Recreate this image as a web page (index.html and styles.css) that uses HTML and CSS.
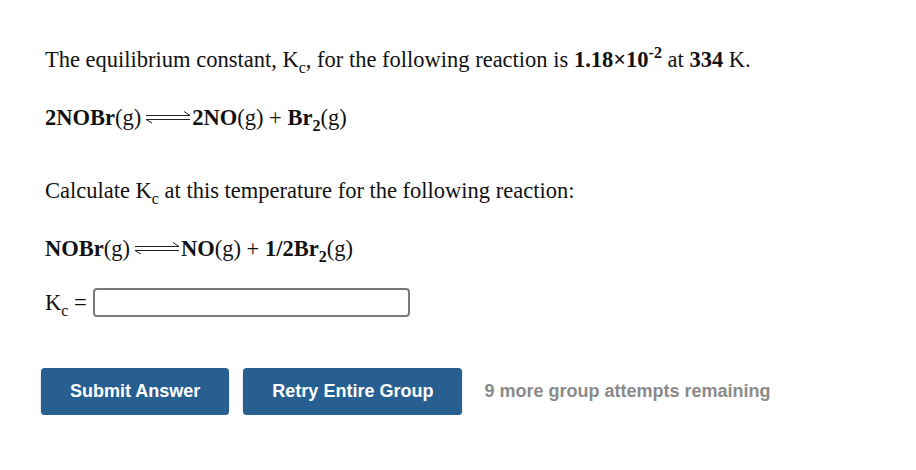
FILE: index.html
```html
<!DOCTYPE html>
<html lang="en">
<head>
  <meta charset="UTF-8">
  <title>Equilibrium Question</title>
  <link rel="stylesheet" href="styles.css">
</head>
<body>
  <div class="question">
    <p class="line">The equilibrium constant, K<sub>c</sub>, for the following reaction is <b>1.18&times;10<sup>-2</sup></b> at <b>334</b> K.</p>

    <p class="line eq"><b>2NOBr</b>(g)<svg class="arrow" width="46" height="14" viewBox="0 0 46 14"><path d="M1 5.5H45L39 1.5" /><path d="M45 9.5H1L7 13" /></svg><b>2NO</b>(g) + <b>Br<sub>2</sub></b>(g)</p>

    <p class="line gap">Calculate K<sub>c</sub> at this temperature for the following reaction:</p>

    <p class="line eq tight"><b>NOBr</b>(g)<svg class="arrow" width="46" height="14" viewBox="0 0 46 14"><path d="M1 5.5H45L39 1.5" /><path d="M45 9.5H1L7 13" /></svg><b>NO</b>(g) + <b>1/2Br<sub>2</sub></b>(g)</p>

    <div class="answer">
      <span class="label">K<sub>c</sub> =</span>
      <input type="text" class="answer-box">
    </div>
  </div>

  <div class="actions">
    <button class="btn">Submit Answer</button>
    <button class="btn">Retry Entire Group</button>
    <span class="attempts">9 more group attempts remaining</span>
  </div>
</body>
</html>
```

FILE: styles.css
```css
body {
  margin: 0;
  padding: 0;
  background: #fff;
}

.question {
  padding: 42px 0 0 45px;
  font-family: "Liberation Serif", "Times New Roman", serif;
  font-size: 22.5px;
  color: #111;
}

.line {
  margin: 0 0 22px 0;
  line-height: 36px;
  white-space: nowrap;
}

.line.gap {
  margin-top: 37px;
}

.line.tight {
  margin-bottom: 21px;
}

sub {
  font-size: 16px;
  vertical-align: -6px;
  line-height: 0;
}

sup {
  font-size: 16px;
  vertical-align: 9px;
  line-height: 0;
}

.arrow {
  vertical-align: 1px;
  margin: 0 1px 0 4px;
}

.arrow path {
  fill: none;
  stroke: #222;
  stroke-width: 1;
}

.answer {
  display: flex;
  align-items: center;
  gap: 6px;
}

.answer-box {
  width: 313px;
  height: 25px;
  margin: 0;
  padding: 0;
  border: 2px solid #7a7a7a;
  border-radius: 4px;
  box-sizing: content-box;
}

.actions {
  display: flex;
  align-items: center;
  gap: 14px;
  padding: 51px 0 0 41px;
  font-family: "Liberation Sans", Arial, sans-serif;
  font-weight: bold;
  font-size: 18px;
}

.btn {
  height: 47px;
  padding: 0 29px;
  border: none;
  border-radius: 4px;
  background: #275f91;
  color: #fff;
  font: inherit;
  box-shadow: 0 1px 2px rgba(0, 0, 0, 0.25);
}

.attempts {
  margin-left: 8px;
  color: #8a8a8a;
}
```
